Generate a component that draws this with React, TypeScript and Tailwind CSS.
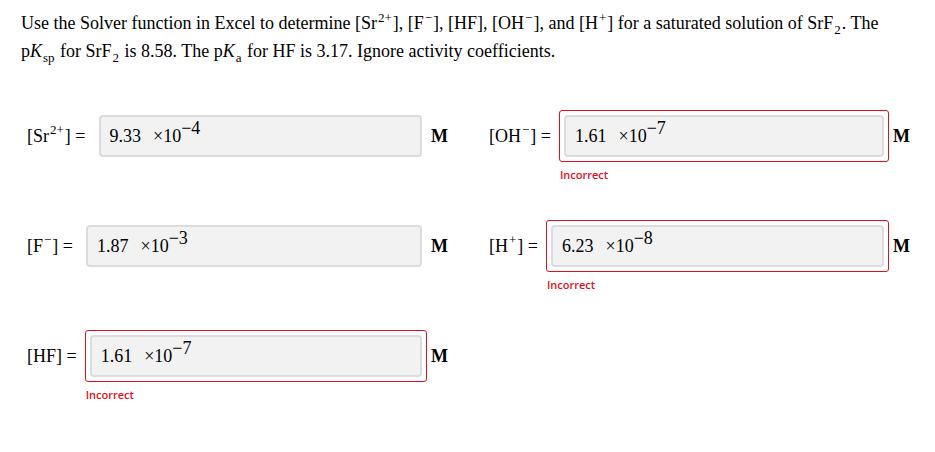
import type { ReactNode } from 'react';

type Field = {
  label: ReactNode;
  mantissa: string;
  exp: string;
  wrong?: boolean;
};

function Sup({ children }: { children: ReactNode }) {
  return <span className="relative -top-[7px] px-[1px] text-[13px] leading-none">{children}</span>;
}

function Sub({ children }: { children: ReactNode }) {
  return <span className="relative top-[5px] px-[1px] text-[13px] leading-none">{children}</span>;
}

function AnswerRow({ field }: { field: Field }) {
  return (
    <div className="flex h-[110px] items-start">
      <div className="flex h-[52px] items-center whitespace-nowrap pr-[8px]">{field.label}</div>
      <div className="flex flex-1 flex-col">
        <div
          className={`rounded-[3px] border p-[4px] ${field.wrong ? 'border-[#e0101e]' : 'border-transparent'}`}
        >
          <div className="flex h-[42px] items-center rounded-[4px] border-2 border-[#dcdcdc] bg-[#f2f2f2] pl-[9px]">
            <span>{field.mantissa}</span>
            <span className="ml-[12px]">×10</span>
            <span className="relative -top-[8px] leading-none">{field.exp}</span>
          </div>
        </div>
        {field.wrong && (
          <span className="mt-[6px] pl-[1px] font-['Open_Sans',sans-serif] text-[11px] leading-[14px] font-semibold text-[#e0101e]">
            Incorrect
          </span>
        )}
      </div>
      <div className="flex h-[52px] items-center pl-[4px] font-bold">M</div>
    </div>
  );
}

const left: Field[] = [
  {
    label: (
      <>
        [Sr<Sup>2+</Sup>] =
      </>
    ),
    mantissa: '9.33',
    exp: '−4',
  },
  {
    label: (
      <>
        [F<Sup>−</Sup>] =
      </>
    ),
    mantissa: '1.87',
    exp: '−3',
  },
  { label: <>[HF] =</>, mantissa: '1.61', exp: '−7', wrong: true },
];

const right: Field[] = [
  {
    label: (
      <>
        [OH<Sup>−</Sup>] =
      </>
    ),
    mantissa: '1.61',
    exp: '−7',
    wrong: true,
  },
  {
    label: (
      <>
        [H<Sup>+</Sup>] =
      </>
    ),
    mantissa: '6.23',
    exp: '−8',
    wrong: true,
  },
];

export default function App() {
  return (
    <div className="h-[452px] w-[935px] bg-white font-['Liberation_Serif',serif] text-[18px] text-black">
      <p className="pt-[9px] pl-[21px] leading-[28px]">
        Use the Solver function in Excel to determine [Sr<Sup>2+</Sup>], [F<Sup>−</Sup>], [HF], [OH
        <Sup>−</Sup>], and [H<Sup>+</Sup>] for a saturated solution of SrF<Sub>2</Sub>. The
        <br />p<i>K</i>
        <Sub>sp</Sub> for SrF<Sub>2</Sub> is 8.58. The p<i>K</i>
        <Sub>a</Sub> for HF is 3.17. Ignore activity coefficients.
      </p>

      <div className="mt-[45px] grid grid-cols-[421px_421px] gap-x-[41px] pl-[27px]">
        <div className="flex flex-col">
          {left.map((f, i) => (
            <AnswerRow key={i} field={f} />
          ))}
        </div>
        <div className="flex flex-col">
          {right.map((f, i) => (
            <AnswerRow key={i} field={f} />
          ))}
        </div>
      </div>
    </div>
  );
}
